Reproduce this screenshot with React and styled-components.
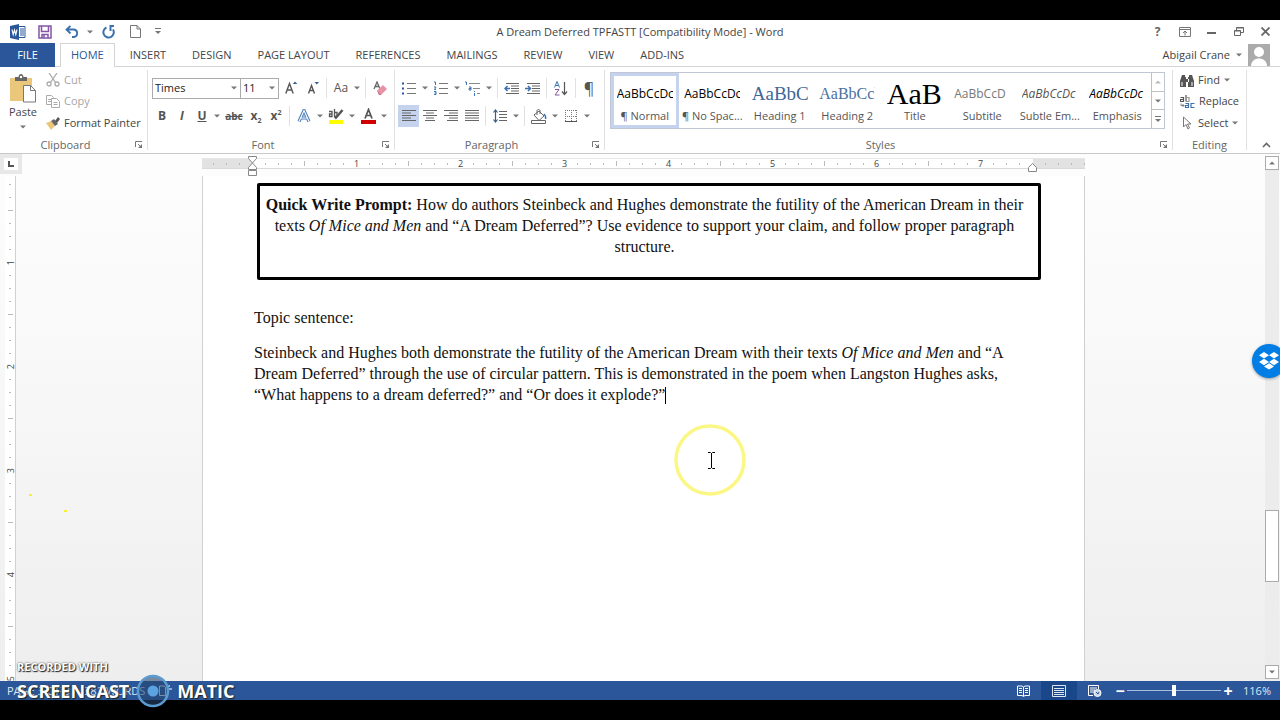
import React, { useState } from 'react';
import styled, { createGlobalStyle } from 'styled-components';

const GlobalStyle = createGlobalStyle`
  * {
    box-sizing: border-box;
  }

  body {
    margin: 0;
    background: #000;
    color: #444;
    font-family: "Open Sans", "Noto Sans", sans-serif;
    font-size: 11px;
    line-height: 16px;
  }

  button, select, input {
    font: inherit;
    color: inherit;
    margin: 0;
    padding: 0;
    border: 0;
    background: none;
    border-radius: 0;
  }

  svg {
    display: block;
    flex: none;
  }
`;

const Frame = styled.div`
  position: relative;
  display: flex;
  flex-direction: column;
  height: 100vh;
  padding: 20px 0;
  overflow: hidden;
  background: #000;
`;

const TitleBar = styled.header`
  display: grid;
  grid-template-columns: 1fr auto 1fr;
  align-items: center;
  height: 23px;
  background: #fff;
`;

const Tools = styled.div`
  display: flex;
  align-items: center;
  justify-content: ${props => props.$end ? 'flex-end' : 'flex-start'};
  padding: 0 ${props => props.$end ? '1px' : '4px'};
`;

const ToolButton = styled.button`
  display: flex;
  flex: none;
  align-items: center;
  justify-content: center;
  width: ${props => props.$width || 27}px;
  height: 22px;
  background: ${props => props.$active ? '#c5d3ee' : 'none'};
`;

const Title = styled.h1`
  margin: 0;
  font-size: 11px;
  font-weight: 400;
`;

const TabBar = styled.nav`
  display: flex;
  height: 24px;
  background: #fff;
  border-bottom: 1px solid #d4d4d4;
`;

const FileTab = styled.button`
  width: 55px;
  height: 24px;
  margin-right: 5px;
  background: #2b579a;
  color: #fff;
`;

const Tab = styled.button`
  height: 24px;
  margin-right: 4px;
  padding: 0 10px 2px;
  border: 1px solid ${props => props.$active ? '#d4d4d4' : 'transparent'};
  border-bottom: 0;
  background: ${props => props.$active ? '#fff' : 'none'};
  color: ${props => props.$active ? '#2b579a' : '#444'};
  white-space: nowrap;
`;

const Account = styled.button`
  display: flex;
  align-items: center;
  gap: 6px;
  margin: 0 10px 0 auto;
  white-space: nowrap;
`;

const Ribbon = styled.section`
  display: flex;
  height: 87px;
  padding-top: 3px;
  background: #fff;
  border-bottom: 1px solid #c8c8c8;
`;

const Group = styled.div`
  display: flex;
  flex-direction: column;
  flex: ${props => props.$grow ? '1 1 0' : 'none'};
  width: ${props => props.$width ? props.$width + 'px' : 'auto'};
  min-width: 0;
  height: 80px;
  border-right: 1px solid #e1e1e1;
`;

const GroupBody = styled.div`
  display: flex;
  flex: 1;
  flex-direction: ${props => props.$column ? 'column' : 'row'};
  gap: ${props => props.$column ? '6px' : '0'};
  padding: ${props => props.$pad || '0'};
`;

const GroupFooter = styled.div`
  display: flex;
  align-items: center;
  height: 14px;
  margin-bottom: -2px;
  color: #666;
`;

const GroupName = styled.span`
  flex: 1;
  text-align: center;
`;

const Row = styled.div`
  display: flex;
  align-items: center;
  height: 22px;
`;

const Divider = styled.span`
  width: 1px;
  height: 20px;
  margin: 0 3px;
  background: #e1e1e1;
`;

const Glyph = styled.span`
  color: ${props => props.$color || '#555'};
  font-size: ${props => props.$size || 12}px;
  font-weight: ${props => props.$bold ? 700 : 400};
  font-style: ${props => props.$italic ? 'italic' : 'normal'};
  text-decoration: ${props => props.$line || 'none'};

  sub, sup {
    font-size: 7px;
    line-height: 0;
  }
`;

const PasteButton = styled.button`
  display: flex;
  flex-direction: column;
  align-items: center;
  width: 46px;
  padding-top: 4px;
  line-height: 18px;

  svg + span {
    margin-bottom: 4px;
  }
`;

const Commands = styled.div`
  display: flex;
  flex-direction: column;
`;

const Command = styled.button`
  display: flex;
  align-items: center;
  gap: 4px;
  height: ${props => props.$tall ? 22 : 20}px;
  color: ${props => props.$off ? '#a6a6a6' : '#444'};
  white-space: nowrap;
`;

const SelectBox = styled.label`
  display: grid;
  align-items: center;
  width: ${props => props.$width}px;
  height: 21px;
  border: 1px solid #ababab;

  & + & {
    border-left: 0;
  }

  select, svg {
    grid-area: 1 / 1;
  }

  select {
    width: 100%;
    padding-left: 2px;
    appearance: none;
    color: #222;
  }

  svg {
    justify-self: end;
    margin-right: 3px;
    pointer-events: none;
  }
`;

const Gallery = styled.div`
  display: flex;
  height: 57px;
  border: 1px solid #c0c6d4;
`;

const StyleItem = styled.button`
  display: flex;
  flex: 1 1 0;
  flex-direction: column;
  align-items: center;
  min-width: 0;
  padding-top: 2px;
  border: 3px solid ${props => props.$active ? '#c5d3ee' : 'transparent'};
`;

const Sample = styled.span`
  display: flex;
  align-items: center;
  width: 56px;
  height: 31px;
  overflow: hidden;
  color: ${props => props.$color || '#000'};
  font-family: ${props => props.$serif ? '"Liberation Serif", serif' : 'inherit'};
  font-size: ${props => props.$size || 12}px;
  font-style: ${props => props.$italic ? 'italic' : 'normal'};
  line-height: 28px;
  white-space: nowrap;
`;

const SampleName = styled.span`
  color: #555;
  line-height: 14px;
  white-space: nowrap;
`;

const GalleryScroll = styled.div`
  display: flex;
  flex-direction: column;
  width: 13px;
  border-left: 1px solid #c0c0c0;

  button {
    display: flex;
    flex: 1;
    align-items: center;
    justify-content: center;
  }

  button + button {
    border-top: 1px solid #c0c0c0;
  }
`;

const Collapse = styled.button`
  display: flex;
  flex: none;
  align-items: flex-end;
  justify-content: center;
  width: 33px;
  padding: 0 0 5px 6px;
`;

const Workspace = styled.main`
  position: relative;
  display: grid;
  grid-template-columns: 22px minmax(0, 1fr) 15px;
  flex: 1;
  min-height: 0;
  overflow: hidden;
  background: linear-gradient(#fdfdfd, #f9f9f9 35%, #eee);
`;

const SideRuler = styled.div`
  display: flex;
  flex-direction: column;
  min-height: 0;
  overflow: hidden;
`;

const TabStop = styled.button`
  display: flex;
  flex: none;
  align-items: center;
  justify-content: center;
  height: 20px;
  margin-bottom: 2px;
  border: 4px solid #e8e8e8;
  background: #fff;
`;

const SideScale = styled.div`
  flex: 1;
  width: 11px;
  min-height: 0;
  margin-left: 5px;
  padding-top: 2px;
  overflow: hidden;
  background: #fff;
  border-right: 1px solid #d0d0d0;
`;

const SideCell = styled.div`
  display: flex;
  align-items: center;
  justify-content: center;
  height: 13px;
  font-size: 9px;
  line-height: 13px;

  span {
    writing-mode: vertical-rl;
    transform: rotate(180deg);
  }
`;

const Mark = styled.i`
  width: ${props => props.$w}px;
  height: ${props => props.$h}px;
  background: #bbb;
`;

const Canvas = styled.div`
  display: flex;
  flex-direction: column;
  align-items: center;
  min-height: 0;
`;

const TopRuler = styled.div`
  position: relative;
  display: flex;
  flex: none;
  width: 100%;
  max-width: 883px;
  height: 11px;
  margin: 4px 0 7px;
  padding-left: 5px;
  background: linear-gradient(90deg, #e2e2e2 51px, #fff 51px, #fff 831px, #e2e2e2 831px);
  border-top: 1px solid #e6e6e6;
  border-bottom: 1px solid #d9d9d9;
`;

const TopTicks = styled.div`
  display: flex;
  min-width: 0;
  overflow-x: clip;
`;

const TopCell = styled.div`
  display: flex;
  flex: none;
  align-items: center;
  justify-content: center;
  width: 13px;
  font-size: 9px;
  line-height: 9px;
`;

const Marker = styled.svg`
  position: absolute;
  top: ${props => props.$top}px;
  left: ${props => props.$left}px;
`;

const Page = styled.article`
  flex: 1;
  width: 100%;
  max-width: 883px;
  min-height: 0;
  padding: 7px 43px 0 51px;
  background: #fff;
  border: 1px solid #d0d0d0;
  border-width: 0 1px;
  color: #111;
  font-family: "Liberation Serif", serif;
  font-size: 16px;
  line-height: 21px;
`;

const Prompt = styled.p`
  margin: 0 0 27px 3px;
  padding: 8px 13px 20px 4px;
  border: 3px solid #000;
  border-radius: 2px;
  text-align: center;
`;

const Text = styled.p`
  margin: 0 7px 14px 0;
`;

const Caret = styled.i`
  display: inline-block;
  width: 1px;
  height: 17px;
  background: #000;
  vertical-align: -4px;
`;

const ScrollBar = styled.div`
  display: flex;
  flex-direction: column;
  margin: 2px 0;
  padding-right: 1px;
  background: linear-gradient(90deg, #ececec 14px, transparent 14px);
`;

const ScrollButton = styled.button`
  display: flex;
  align-items: center;
  justify-content: center;
  height: 14px;
  border: 1px solid #ababab;
  background: #fff;
`;

const Track = styled.div`
  display: flex;
  flex: 1;
  flex-direction: column;

  &::before {
    content: "";
    flex: 341;
  }

  &::after {
    content: "";
    flex: 83;
  }
`;

const Thumb = styled.div`
  flex: 71;
  border: 1px solid #ababab;
  background: #fff;
`;

const Pointer = styled.svg`
  position: absolute;
  top: 270px;
  left: 674px;
`;

const Speck = styled.i`
  position: absolute;
  top: ${props => props.$top}px;
  left: ${props => props.$left}px;
  width: 3px;
  height: 2px;
  background: #f5f032;
`;

const DropboxBadge = styled.button`
  position: absolute;
  top: 190px;
  right: -6px;
  display: flex;
  align-items: center;
  justify-content: center;
  width: 34px;
  height: 34px;
  border-radius: 50%;
  background: #007ee5;
  box-shadow: 0 1px 3px #999;
`;

const StatusBar = styled.footer`
  display: flex;
  flex: none;
  align-items: center;
  gap: 14px;
  height: 19px;
  padding: 0 9px 0 7px;
  background: #2b579a;
  color: #dfe7f3;
`;

const StatusTools = styled.div`
  display: flex;
  align-items: center;
  height: 19px;
  margin-left: auto;
`;

const ViewButton = styled.button`
  display: flex;
  align-items: center;
  justify-content: center;
  width: 36px;
  height: 19px;
  background: ${props => props.$active ? '#19478a' : 'none'};
`;

const ZoomButton = styled.button`
  width: 14px;
  color: #fff;
  font-size: 16px;
  font-weight: 700;
`;

const Zoom = styled.input`
  width: 94px;
  height: 19px;
  appearance: none;

  &::-webkit-slider-runnable-track {
    height: 11px;
    background: linear-gradient(transparent 5px, #a9bedd 5px, #a9bedd 6px, transparent 6px);
  }

  &::-webkit-slider-thumb {
    width: 4px;
    height: 11px;
    appearance: none;
    background: #fff;
  }
`;

const Percent = styled.span`
  width: 36px;
  text-align: right;
`;

const Watermark = styled.div`
  position: absolute;
  bottom: 13px;
  left: 17px;
  color: #fff;
  font-size: 18px;
  font-weight: 700;
  text-shadow: 1px 1px 1px #222, 0 0 2px #333;

  small {
    display: block;
    font-size: 11px;
    line-height: 16px;
  }

  div {
    display: flex;
    align-items: center;
    gap: 7px;
    height: 32px;
  }
`;

const Arrow = ({ up, color = '#777' }) => (
  <svg width="6" height="4" viewBox="0 0 6 4"><path d={up ? 'M0 3.5h6L3 .5z' : 'M0 .5h6L3 3.5z'} fill={color} /></svg>
);

const Split = ({ label, width = 22, children }) => (
  <>
    <ToolButton $width={width} aria-label={label}>{children}</ToolButton>
    <ToolButton $width={10} aria-label={`${label} options`}><Arrow /></ToolButton>
  </>
);

const Launcher = ({ label }) => (
  <ToolButton $width={16} aria-label={`${label} settings`}>
    <svg width="8" height="8" fill="none" stroke="#777"><path d="M.5 6V.5H7M3 3l3 3" /><path d="M7 3v4H3z" fill="#777" stroke="none" /></svg>
  </ToolButton>
);

const Lines = ({ rows }) => (
  <svg width="14" height="12" stroke="#666">
    {rows.map(([from, to], i) => <path key={i} d={`M${from} ${i * 2.5 + 0.5}H${to}`} />)}
  </svg>
);

const WordIcon = () => (
  <svg width="16" height="16" viewBox="0 0 16 16">
    <path d="M8 2.5h7v11H8z" fill="#fff" stroke="#2b579a" />
    <path d="M10 5h4M10 7h4M10 9h4M10 11h4" stroke="#2b579a" />
    <path d="M0 2l9-2v16l-9-2z" fill="#2b579a" />
    <path d="M2 5.500l1.200 5 1.300-4.500 1.300 4.500 1.200-5" fill="none" stroke="#fff" strokeWidth="1.100" />
  </svg>
);

const SaveIcon = () => (
  <svg width="14" height="14" viewBox="0 0 14 14" fill="none" stroke="#8355a6" strokeWidth="1.500">
    <path d="M1 1h12v12H1zM3.500 1v5.500h7V1M4 13V9.500h6V13M6 10v3" />
  </svg>
);

const UndoIcon = () => (
  <svg width="14" height="14" viewBox="0 0 14 14" fill="none" stroke="#3b72ae" strokeWidth="1.800">
    <path d="M5.500 1L1.500 4.500l4 4M1.500 4.500h7.500a3.800 3.800 0 010 7.500H7" />
  </svg>
);

const RedoIcon = () => (
  <svg width="14" height="14" viewBox="0 0 14 14" fill="none" stroke="#3b72ae" strokeWidth="2">
    <path d="M4.500 2.500a5.200 5.200 0 106.500 2" /><path d="M7.500 1H12M8.500 1v5" />
  </svg>
);

const BlankIcon = () => (
  <svg width="11" height="13" viewBox="0 0 11 13" fill="#fff" stroke="#777">
    <path d="M.5.5h6.500l3.500 3.500v8.500H.5zM7 .5V4h3.500" />
  </svg>
);

const MoreIcon = () => (
  <svg width="6" height="7"><path d="M0 .5h6" stroke="#777" /><path d="M0 3h6L3 6z" fill="#777" /></svg>
);

const PasteIcon = () => (
  <svg width="28" height="29" viewBox="0 0 28 29">
    <path d="M1 4h22v23H1z" fill="#eac77b" />
    <path d="M6 7V3h3.500c0-4 5-4 5 0H18v4z" fill="#666" />
    <circle cx="12" cy="3" r="1.200" fill="#fff" />
    <path d="M14.500 11.500h7l5 5v11.500h-12z" fill="#fff" stroke="#777" />
    <path d="M21.500 11.500v5h5" fill="none" stroke="#777" />
  </svg>
);

const CutIcon = () => (
  <svg width="14" height="14" viewBox="0 0 14 14" fill="none" stroke="#aaa" strokeWidth="1.300">
    <path d="M3 0l6.500 9.500M11 0L4.500 9.500" /><circle cx="3" cy="11" r="2" /><circle cx="11" cy="11" r="2" />
  </svg>
);

const CopyIcon = () => (
  <svg width="14" height="13" viewBox="0 0 14 13" fill="#fff" stroke="#aaa">
    <path d="M.5.5h5l2 2v7h-7zM2 4.500h3M2 6.500h3" /><path d="M5.500 3.500h5l3 3v6h-8zM7.500 7.500h4M7.500 9.500h4" />
  </svg>
);

const PainterIcon = () => (
  <svg width="14" height="13" viewBox="0 0 14 13">
    <path d="M0 6l5-2 4 5-4 4z" fill="#eac77b" /><path d="M5 4l3-2 4 5-3 2z" fill="#666" /><path d="M9 4l3-4 2 2-3 4z" fill="#555" />
  </svg>
);

const ListIcon = ({ numbered }) => (
  <svg width="14" height="14" viewBox="0 0 14 14">
    <path d="M5 2.500h9M5 7.500h9M5 12.500h9" stroke="#777" />
    {numbered
      ? <path d="M0 1h1.500v3M0 6h2L.5 8.500H2M0 10.500h2v3H0M.5 12H2" fill="none" stroke="#3b72ae" />
      : <path d="M0 1.500h2v2H0zM0 6.500h2v2H0zM0 11.500h2v2H0z" fill="#2b579a" />}
  </svg>
);

const MultiIcon = () => (
  <svg width="16" height="15" viewBox="0 0 16 15" fill="none">
    <path d="M4 2.500h11M8 7.500h7M12 12.500h3" stroke="#888" /><path d="M0 1h1.500v3M4 6h2v3H4V7.500h2M9.500 10v1M9.500 12v3" stroke="#3b72ae" />
  </svg>
);

const IndentIcon = ({ more }) => (
  <svg width="15" height="11" viewBox="0 0 15 11" fill="none">
    <path d="M2 .5h13M7 3h8M7 5.500h8M7 8h8M2 10.500h13" stroke="#666" />
    <path d={more ? 'M0 5.500h5M3 3l2.500 2.500L3 8' : 'M1 5.500h5M3.500 3L1 5.500 3.500 8'} stroke="#3b72ae" strokeWidth="1.500" />
  </svg>
);

const SortIcon = () => (
  <svg width="14" height="15" viewBox="0 0 14 15" fill="none">
    <path d="M.5 6.500L3 .5l2.500 6M1.500 4.500h3" stroke="#3b72ae" /><path d="M1 8.500h4L1 14h4.500" stroke="#8355a6" />
    <path d="M10.500 1v12M8 10.500l2.500 3 2.500-3" stroke="#555" strokeWidth="1.200" />
  </svg>
);

const SpacingIcon = () => (
  <svg width="14" height="14" viewBox="0 0 14 14" fill="none">
    <path d="M6 2.500h8M6 5.500h8M6 8.500h8M6 11.500h8" stroke="#666" />
    <path d="M2.500 1v12M.5 3.500l2-2.500 2 2.500M.5 10.500l2 2.500 2-2.500" stroke="#3a5f8a" strokeWidth="1.200" />
  </svg>
);

const BucketIcon = () => (
  <svg width="16" height="15" viewBox="0 0 16 15" fill="none" stroke="#666">
    <path d="M3 6l5-4 5 5-5 4.500zM6 6V2c0-2 3-2 3 0v3" /><path d="M13 5c2 2 2 3 1.500 5" stroke="#3b72ae" strokeWidth="1.500" /><path d="M.5 11.500h14v3H.5z" fill="#fff" />
  </svg>
);

const BordersIcon = () => (
  <svg width="12" height="12" viewBox="0 0 12 12" fill="none" stroke="#777">
    <path d="M.5 0v12M11.500 0v12M0 .5h12M6.500 0v12M0 6.500h12" strokeDasharray="1 1" /><path d="M0 11.500h12" stroke="#555" />
  </svg>
);

const EraserIcon = () => (
  <svg width="14" height="15" viewBox="0 0 14 15">
    <path d="M1 8L4 1l3 7M2 5.500h4" fill="none" stroke="#666" strokeWidth="1.300" /><path d="M4 9.500L10 4l4 4-6 6H6z" fill="#e892a6" /><path d="M4 9.500l4 4.500H6z" fill="#c96f86" />
  </svg>
);

const SizeIcon = ({ smaller }) => (
  <svg width="13" height="14" viewBox="0 0 13 14" fill="none" stroke="#555" strokeWidth="1.400">
    <path d={smaller ? 'M1.500 12.500l3-8 3 8M2.500 9.500h4' : 'M.8 12.500L4.500 2.500l3.700 10M2 9h5'} />
    <path d={smaller ? 'M7.500 1h4.500L9.800 3.500z' : 'M7.800 3h4.500L10 .5z'} fill="#3a5f8a" stroke="none" />
  </svg>
);

const EffectIcon = () => (
  <svg width="14" height="14" viewBox="0 0 14 14" fill="none">
    <path d="M2 12.500L7 1.500l5 11M4 9h6" stroke="#4a7fba" strokeWidth="3.200" /><path d="M2 12.500L7 1.500l5 11M4 9h6" stroke="#fff" strokeWidth="1.100" />
  </svg>
);

const HighlightIcon = () => (
  <svg width="16" height="16" viewBox="0 0 16 16" fill="none" stroke="#555">
    <path d="M1 12h14v4H1z" fill="#ff0" stroke="none" />
    <path d="M1 3.500h3v5H1.500V6H4M6.500 1v7.500H9V4.500H6.500" strokeWidth="1.300" /><path d="M14.500 2L9 8.500l-2 2" strokeWidth="2.500" />
  </svg>
);

const FontColorIcon = () => (
  <svg width="15" height="16" viewBox="0 0 15 16">
    <path d="M0 12h15v4H0z" fill="#d00000" /><path d="M4 10.500L7.500 1.500l3.500 9M5 7.500h5" fill="none" stroke="#555" strokeWidth="1.700" />
  </svg>
);

const FindIcon = () => (
  <svg width="14" height="13" viewBox="0 0 14 13" fill="#555">
    <path d="M2 1h3v2h1v10H0V7zM12 1H9v2H8v10h6V7zM5 5h4v3H5z" /><path d="M2 8v4M12 8v4" stroke="#fff" />
  </svg>
);

const ReplaceIcon = () => (
  <svg width="15" height="13" viewBox="0 0 15 13" fill="none" strokeWidth="1.200">
    <path d="M.5 2.500h3v4h-3v-2h3M6 0v6.500" stroke="#555" /><path d="M6 6.500h3v-4H6" stroke="#999" />
    <path d="M5.500 8.500h3v4h-3v-2h3M14.500 8.500h-3.500v4h3.500" stroke="#3b72ae" /><path d="M1 8.500v2h3M2.500 9L4 10.500 2.500 12" stroke="#666" strokeWidth=".8" />
  </svg>
);

const SelectIcon = () => (
  <svg width="14" height="14" viewBox="0 0 14 14" fill="#fff" stroke="#777">
    <path d="M3.500 1v10l2.500-2.500 2 4.500 1.500-1-2-4h3.500z" />
  </svg>
);

const AvatarIcon = () => (
  <svg width="22" height="22" viewBox="0 0 22 22">
    <path d="M0 0h22v22H0z" fill="#ababab" /><circle cx="11" cy="8" r="5" fill="#fff" /><path d="M3 22c0-10 16-10 16 0z" fill="#fff" />
  </svg>
);

const BookIcon = () => (
  <svg width="13" height="12" viewBox="0 0 13 12" fill="none" stroke="#fff">
    <path d="M.5 1h4.500l1.500 1 1.500-1h4.500v9.500H8l-1.500 1-1.500-1H.5zM6.500 2v9M2 3.500h3M2 5.500h3M2 7.500h3M8 3.500h3M8 5.500h3M8 7.500h3" />
  </svg>
);

const PrintIcon = () => (
  <svg width="14" height="12" viewBox="0 0 14 12" fill="none" stroke="#dfe7f3">
    <path d="M.5.5h13v11H.5zM2 3.500h10M2 5.500h10M2 7.500h10M2 9.500h10" />
  </svg>
);

const WebIcon = () => (
  <svg width="14" height="12" viewBox="0 0 14 12" fill="none" stroke="#fff">
    <path d="M5 10.500H.5V.5h10V4M2 3h7M2 5h5M2 7h4" /><circle cx="9.500" cy="8" r="3.500" fill="#c9d6ea" /><path d="M8 7l2 2 1-2" stroke="#2b579a" />
  </svg>
);

const ProofIcon = () => (
  <svg width="14" height="12" viewBox="0 0 14 12" fill="none" stroke="#fff"><path d="M.5 1H5l1.500 1v9L5 10.500H.5zM6.500 11L8 10M9 1h2M10 4h3" /></svg>
);

const tabs = ['HOME', 'INSERT', 'DESIGN', 'PAGE LAYOUT', 'REFERENCES', 'MAILINGS', 'REVIEW', 'VIEW', 'ADD-INS'];

const styles = [
  { name: '¶ Normal', sample: 'AaBbCcDc' },
  { name: '¶ No Spac...', sample: 'AaBbCcDc' },
  { name: 'Heading 1', sample: 'AaBbC', serif: true, size: 19, color: '#3f6797' },
  { name: 'Heading 2', sample: 'AaBbCcl', serif: true, size: 16, color: '#4a719f' },
  { name: 'Title', sample: 'AaB', serif: true, size: 30 },
  { name: 'Subtitle', sample: 'AaBbCcD', color: '#777' },
  { name: 'Subtle Em...', sample: 'AaBbCcDc', color: '#555', italic: true },
  { name: 'Emphasis', sample: 'AaBbCcDc', italic: true },
];

// eight marks to the inch: dots, a longer one at the half, a number at the end
const rulerMark = (i, vertical) => {
  const step = ((i % 8) + 8) % 8;
  if (step === 0 && i > 0) return <span>{i / 8}</span>;
  if (step === 0) return null;
  const long = step === 4 ? 5 : 2;
  return vertical ? <Mark $w={long} $h={1} /> : <Mark $w={1} $h={long} />;
};

const App = () => {
  const [tab, setTab] = useState('HOME');
  const [style, setStyle] = useState('¶ Normal');
  const [zoom, setZoom] = useState(116);

  return (
    <Frame>
      <GlobalStyle />
      <TitleBar>
        <Tools>
          <ToolButton aria-label="Word"><WordIcon /></ToolButton>
          <ToolButton aria-label="Save"><SaveIcon /></ToolButton>
          <Split label="Undo" width={27}><UndoIcon /></Split>
          <ToolButton aria-label="Redo"><RedoIcon /></ToolButton>
          <ToolButton aria-label="New"><BlankIcon /></ToolButton>
          <ToolButton $width={18} aria-label="Customize toolbar"><MoreIcon /></ToolButton>
        </Tools>
        <Title>A Dream Deferred TPFASTT [Compatibility Mode] - Word</Title>
        <Tools $end>
          <ToolButton aria-label="Help"><Glyph $bold $color="#666">?</Glyph></ToolButton>
          <ToolButton aria-label="Ribbon display">
            <svg width="12" height="10" fill="none" stroke="#777"><path d="M.5.5h11v9H.5zM0 2.500h12M6 8.500V4M4 6l2-2 2 2" /></svg>
          </ToolButton>
          <ToolButton aria-label="Minimize"><svg width="9" height="5"><path d="M0 3h9v2H0z" fill="#666" /></svg></ToolButton>
          <ToolButton aria-label="Restore">
            <svg width="10" height="9" fill="none" stroke="#666"><path d="M.5 3.500h6v5h-6zM0 4h7M2.500 3V.5h7v5H7M2 1h8" /></svg>
          </ToolButton>
          <ToolButton aria-label="Close"><svg width="9" height="9" stroke="#666" strokeWidth="1.800"><path d="M.5.5l8 8M8.500.5l-8 8" /></svg></ToolButton>
        </Tools>
      </TitleBar>

      <TabBar>
        <FileTab>FILE</FileTab>
        {
          tabs.map(name => (
            <Tab key={name} $active={name === tab} onClick={() => setTab(name)}>{name}</Tab>
          ))
        }
        <Account>Abigail Crane <Arrow /><AvatarIcon /></Account>
      </TabBar>

      <Ribbon>
        <Group $width={148}>
          <GroupBody>
            <PasteButton><PasteIcon /><span>Paste</span><Arrow /></PasteButton>
            <Commands>
              <Command $off><CutIcon />Cut</Command>
              <Command $tall $off><CopyIcon />Copy</Command>
              <Command $tall><PainterIcon />Format Painter</Command>
            </Commands>
          </GroupBody>
          <GroupFooter><GroupName>Clipboard</GroupName><Launcher label="Clipboard" /></GroupFooter>
        </Group>

        <Group $width={247}>
          <GroupBody $column $pad="7px 0 0 4px">
            <Row>
              <SelectBox $width={89}>
                <select aria-label="Font"><option>Times</option></select>
                <Arrow />
              </SelectBox>
              <SelectBox $width={38}>
                <select aria-label="Font size"><option>11</option></select>
                <Arrow />
              </SelectBox>
              <ToolButton $width={24} aria-label="Grow font"><SizeIcon /></ToolButton>
              <ToolButton $width={20} aria-label="Shrink font"><SizeIcon smaller /></ToolButton>
              <Divider />
              <Split label="Change case"><Glyph>Aa</Glyph></Split>
              <Divider />
              <ToolButton $width={22} aria-label="Clear formatting"><EraserIcon /></ToolButton>
            </Row>
            <Row>
              <ToolButton $width={20}><Glyph $bold>B</Glyph></ToolButton>
              <ToolButton $width={20}><Glyph $bold $italic>I</Glyph></ToolButton>
              <Split label="Underline" width={20}><Glyph $bold $line="underline">U</Glyph></Split>
              <ToolButton $width={24}><Glyph $bold $size={10} $line="line-through">abc</Glyph></ToolButton>
              <ToolButton $width={20}><Glyph $bold>x<sub>2</sub></Glyph></ToolButton>
              <ToolButton $width={20}><Glyph $bold>x<sup>2</sup></Glyph></ToolButton>
              <Divider />
              <Split label="Text effects"><EffectIcon /></Split>
              <Split label="Highlight"><HighlightIcon /></Split>
              <Split label="Font color"><FontColorIcon /></Split>
            </Row>
          </GroupBody>
          <GroupFooter><GroupName>Font</GroupName><Launcher label="Font" /></GroupFooter>
        </Group>

        <Group $width={210}>
          <GroupBody $column $pad="7px 0 0 3px">
            <Row>
              <Split label="Bullets"><ListIcon /></Split>
              <Split label="Numbering"><ListIcon numbered /></Split>
              <Split label="Multilevel list"><MultiIcon /></Split>
              <Divider />
              <ToolButton $width={21} aria-label="Decrease indent"><IndentIcon /></ToolButton>
              <ToolButton $width={21} aria-label="Increase indent"><IndentIcon more /></ToolButton>
              <Divider />
              <ToolButton $width={22} aria-label="Sort"><SortIcon /></ToolButton>
              <Divider />
              <ToolButton $width={20}><Glyph $size={16}>¶</Glyph></ToolButton>
            </Row>
            <Row>
              <ToolButton $width={21} $active aria-label="Align left"><Lines rows={[[0, 14], [0, 9], [0, 14], [0, 9], [0, 14]]} /></ToolButton>
              <ToolButton $width={21} aria-label="Center"><Lines rows={[[0, 14], [3, 11], [0, 14], [3, 11], [2, 12]]} /></ToolButton>
              <ToolButton $width={21} aria-label="Align right"><Lines rows={[[0, 14], [5, 14], [0, 14], [5, 14], [3, 14]]} /></ToolButton>
              <ToolButton $width={21} aria-label="Justify"><Lines rows={[[0, 14], [0, 14], [0, 14], [0, 14], [0, 14]]} /></ToolButton>
              <Divider />
              <Split label="Line spacing"><SpacingIcon /></Split>
              <Divider />
              <Split label="Shading"><BucketIcon /></Split>
              <Split label="Borders"><BordersIcon /></Split>
            </Row>
          </GroupBody>
          <GroupFooter><GroupName>Paragraph</GroupName><Launcher label="Paragraph" /></GroupFooter>
        </Group>

        <Group $grow>
          <GroupBody $column $pad="2px 7px 0 5px">
            <Gallery>
              {
                styles.map(item => (
                  <StyleItem key={item.name} $active={item.name === style} onClick={() => setStyle(item.name)}>
                    <Sample $serif={item.serif} $size={item.size} $color={item.color} $italic={item.italic}>
                      {item.sample}
                    </Sample>
                    <SampleName>{item.name}</SampleName>
                  </StyleItem>
                ))
              }
              <GalleryScroll>
                <button aria-label="Previous styles"><Arrow up color="#bbb" /></button>
                <button aria-label="Next styles"><Arrow /></button>
                <button aria-label="More styles"><MoreIcon /></button>
              </GalleryScroll>
            </Gallery>
          </GroupBody>
          <GroupFooter><GroupName>Styles</GroupName><Launcher label="Styles" /></GroupFooter>
        </Group>

        <Group $width={74}>
          <GroupBody $pad="0 0 0 7px">
            <Commands>
              <Command><FindIcon />Find <Arrow /></Command>
              <Command $tall><ReplaceIcon />Replace</Command>
              <Command $tall><SelectIcon />Select<Arrow /></Command>
            </Commands>
          </GroupBody>
          <GroupFooter><GroupName>Editing</GroupName></GroupFooter>
        </Group>
        <Collapse aria-label="Collapse ribbon">
          <svg width="9" height="6" fill="none" stroke="#666" strokeWidth="1.600"><path d="M1 5l3.500-3.500L8 5" /></svg>
        </Collapse>
      </Ribbon>

      <Workspace>
        <SideRuler>
          <TabStop aria-label="Tab stop"><svg width="6" height="6"><path d="M1 0v5h5" fill="none" stroke="#555" strokeWidth="2" /></svg></TabStop>
          <SideScale>
            {Array.from({ length: 39 }, (_, i) => <SideCell key={i}>{rulerMark(i + 2, true)}</SideCell>)}
          </SideScale>
        </SideRuler>

        <Canvas>
          <TopRuler>
            <TopTicks>
              {Array.from({ length: 68 }, (_, i) => <TopCell key={i}>{i < 63 ? rulerMark(i - 3) : <Mark $w={1} $h={2} />}</TopCell>)}
            </TopTicks>
            <Marker $top={-3} $left={46} width="9" height="20" fill="#fff" stroke="#888">
              <path d="M.5.5h8v2l-4 4.500-4-4.500zM.5 13.500v-2l4-4.500 4 4.500v2zM.5 14.500h8v5h-8z" />
            </Marker>
            <Marker $top={4} $left={826} width="9" height="9" fill="#fff" stroke="#888">
              <path d="M.5 8.500v-4l4-4 4 4v4z" />
            </Marker>
          </TopRuler>
          <Page>
            <Prompt>
              <b>Quick Write Prompt:</b> How do authors Steinbeck and Hughes demonstrate the futility of the American Dream in their
              texts <i>Of Mice and Men</i> and “A Dream Deferred”? Use evidence to support your claim, and follow proper paragraph
              structure.
            </Prompt>
            <Text>Topic sentence:</Text>
            <Text>
              Steinbeck and Hughes both demonstrate the futility of the American Dream with their texts <i>Of Mice and Men</i> and “A
              Dream Deferred” through the use of circular pattern. This is demonstrated in the poem when Langston Hughes asks,
              “What happens to a dream deferred?” and “Or does it explode?”<Caret />
            </Text>
          </Page>
        </Canvas>

        <ScrollBar>
          <ScrollButton aria-label="Scroll up"><Arrow up /></ScrollButton>
          <Track><Thumb /></Track>
          <ScrollButton aria-label="Scroll down"><Arrow /></ScrollButton>
        </ScrollBar>

        <Pointer width="72" height="72" fill="none">
          <circle cx="36" cy="36" r="34" stroke="#fbf784" strokeWidth="3.500" />
          <path d="M34 28.500h2.500l1 1 1-1H41M37.500 29v15M34 44.500h2.500l1-1 1 1H41" stroke="#000" />
        </Pointer>
        <Speck $top={340} $left={29} />
        <Speck $top={356} $left={64} />
        <DropboxBadge aria-label="Dropbox">
          <svg width="20" height="18" viewBox="0 0 20 18" fill="#fff">
            <path d="M5 0l5 3.200-5 3.200L0 3.200zM15 0l5 3.200-5 3.200-5-3.200zM5 6.800l5 3.200-5 3.200L0 10zM15 6.800l5 3.200-5 3.200-5-3.200zM10 11.200l5 3.200-5 3.200-5-3.200z" />
          </svg>
        </DropboxBadge>
      </Workspace>

      <StatusBar>
        <span>PAGE 3 OF 3</span>
        <span>382 WORDS</span>
        <ProofIcon />
        <StatusTools>
          <ViewButton aria-label="Read mode"><BookIcon /></ViewButton>
          <ViewButton $active aria-label="Print layout"><PrintIcon /></ViewButton>
          <ViewButton aria-label="Web layout"><WebIcon /></ViewButton>
          <ZoomButton aria-label="Zoom out">−</ZoomButton>
          <Zoom type="range" aria-label="Zoom" min="16" max="216" value={zoom} onChange={e => setZoom(Number(e.target.value))} />
          <ZoomButton aria-label="Zoom in">+</ZoomButton>
          <Percent>{zoom}%</Percent>
        </StatusTools>
      </StatusBar>

      <Watermark>
        <small>RECORDED WITH</small>
        <div>
          SCREENCAST
          <svg width="34" height="34" viewBox="0 0 34 34">
            <circle cx="17" cy="17" r="15" fill="#24466f" fillOpacity=".6" stroke="#5b9bd0" strokeWidth="2.500" />
            <circle cx="17" cy="17" r="5.500" fill="#5ba3e0" />
          </svg>
          MATIC
        </div>
      </Watermark>
    </Frame>
  );
};

export default App;
